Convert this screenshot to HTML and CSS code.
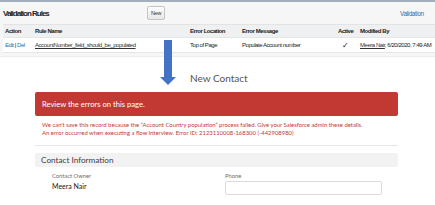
FILE: index.html
```html
<!DOCTYPE html>
<html>
<head>
<meta charset="utf-8">
<link rel="stylesheet" href="styles.css">
</head>
<body>
<div class="page">
  <section class="classic">
    <div class="titlebar">
      <div class="title">Validation Rules</div>
      <div class="newbtn">New</div>
      <div class="spacer"></div>
      <a class="helplink">Validation</a>
    </div>
    <div class="row head">
      <div>Action</div>
      <div>Rule Name</div>
      <div>Error Location</div>
      <div>Error Message</div>
      <div>Active</div>
      <div>Modified By</div>
    </div>
    <div class="row data">
      <div class="actions"><a>Edit</a> | <a>Del</a></div>
      <div class="u">AccountNumber_field_should_be_populated</div>
      <div>Top of Page</div>
      <div>Populate Account number</div>
      <div class="check">&#10003;</div>
      <div><span class="u">Meera Nair</span>, 6/20/2020, 7:49 AM</div>
    </div>
  </section>

  <div class="arrow">
    <div class="shaft"></div>
    <div class="head-tri"></div>
  </div>

  <section class="modal">
    <h1 class="modal-title">New Contact</h1>
    <div class="content">
      <div class="banner">Review the errors on this page.</div>
      <div class="errors">
        <p>We can't save this record because the “Account Country population” process failed. Give your Salesforce admin these details.</p>
        <p>An error occurred when executing a flow interview. Error ID: 2123110008-168300 (-442908980)</p>
      </div>
      <div class="section-head">Contact Information</div>
      <div class="fields">
        <div class="field">
          <div class="label">Contact Owner</div>
          <div class="value">Meera Nair</div>
        </div>
        <div class="field">
          <div class="label">Phone</div>
          <div class="input"></div>
        </div>
        <div class="field">
          <div class="label"><span class="req">*</span>Name</div>
        </div>
        <div class="field">
          <div class="label">Home Phone</div>
        </div>
      </div>
    </div>
  </section>
</div>
</body>
</html>
```
FILE: styles.css
```css
* { box-sizing: border-box; }
html, body { margin: 0; padding: 0; background: #fff; }
.page {
  position: relative;
  width: 435px;
  height: 205px;
  overflow: hidden;
}
.classic {
  font-family: "Liberation Sans", Arial, sans-serif;
  background: #f6f6f6;
  border-top: 2px solid #a3adbb;
  padding-bottom: 3px;
  border-bottom: 1px solid #ececec;
}
.titlebar {
  display: flex;
  align-items: center;
  height: 22px;
  padding: 0 0 0 3px;
}
.title {
  font-weight: bold;
  font-size: 8px;
  letter-spacing: -1px;
  color: #222;
  width: 144px;
}
.newbtn {
  font-size: 5.5px;
  letter-spacing: -0.3px;
  color: #333;
  border: 1px solid #c4c4c4;
  border-radius: 2px;
  background: linear-gradient(#fdfdfd, #e8e8e8);
  padding: 2px 3px;
  line-height: 8px;
}
.spacer { flex: 1; }
.helplink {
  font-size: 6.3px;
  letter-spacing: -0.35px;
  color: #1f6fb5;
  width: 35px;
  white-space: nowrap;
}
.row {
  display: grid;
  grid-template-columns: 30px 155px 52px 96px 22px 1fr;
  font-size: 6px;
  letter-spacing: -0.45px;
  align-items: center;
  color: #222;
  white-space: nowrap;
  margin-left: 3px;
  padding-left: 2px;
}
.head {
  height: 13px;
  background: #eef0f1;
  border-top: 1px solid #e3e3e3;
  font-weight: bold;
}
.data {
  height: 16px;
  background: #fff;
  border-top: 1px solid #e6e6e6;
  border-bottom: 1px solid #e6e6e6;
}
.actions a { color: #1f6fb5; }
.u { text-decoration: underline; color: #333; }
.check {
  font-size: 8px;
  padding-left: 4px;
  font-family: "DejaVu Sans", sans-serif;
  letter-spacing: 0;
}

.arrow {
  position: absolute;
  left: 160px;
  top: 40px;
  width: 16px;
  display: flex;
  flex-direction: column;
  align-items: center;
}
.shaft {
  width: 8px;
  height: 37px;
  background: #4472c4;
}
.head-tri {
  width: 0;
  height: 0;
  border-left: 8px solid transparent;
  border-right: 8px solid transparent;
  border-top: 8px solid #4472c4;
}

.modal {
  font-family: Lato, "Open Sans", sans-serif;
  padding-top: 14px;
}
.modal-title {
  margin: 0 0 0 190px;
  font-size: 10px;
  font-weight: normal;
  color: #555;
  line-height: 14px;
}
.content {
  margin: 7px 37px 0 35px;
}
.banner {
  background: #c23934;
  color: #fff;
  font-size: 7.6px;
  height: 24px;
  line-height: 24px;
  padding-left: 7px;
  border-radius: 2px;
}
.errors {
  color: #c23934;
  font-size: 5.9px;
  padding: 5px 0 8px 7px;
  border-bottom: 1px solid #e6e6e6;
  white-space: nowrap;
}
.errors p { margin: 0; line-height: 8px; }
.section-head {
  margin-top: 7px;
  background: #f3f2f2;
  color: #3e3e3c;
  font-size: 8.2px;
  height: 14px;
  line-height: 14px;
  padding-left: 6px;
  border-radius: 2px;
}
.fields {
  display: grid;
  grid-template-columns: 173px 157px;
  padding-left: 17px;
  padding-top: 5px;
  row-gap: 8px;
}
.label {
  font-size: 5.8px;
  color: #706e6b;
  line-height: 8px;
}
.value {
  font-size: 7px;
  color: #181818;
  line-height: 11px;
  margin-top: 1px;
}
.input {
  margin-top: 1px;
  height: 14px;
  border: 1px solid #dddbda;
  border-radius: 2px;
  background: #fff;
}
.req { color: #c23934; margin-right: 2px; }
```
